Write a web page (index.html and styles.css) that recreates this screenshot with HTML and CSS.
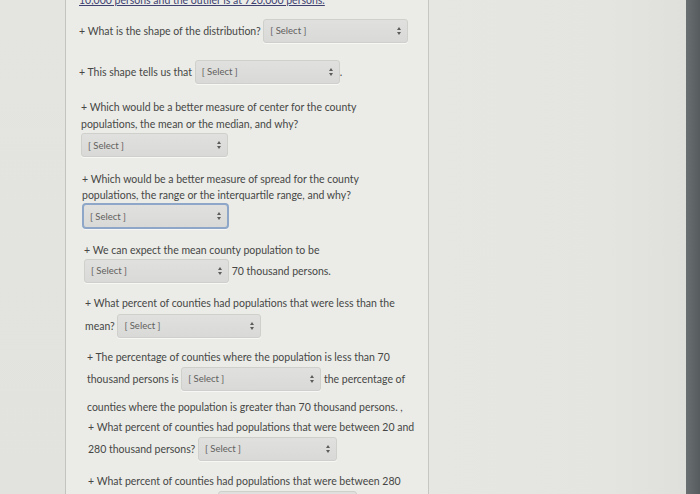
FILE: index.html
```html
<!DOCTYPE html>
<html>
<head>
<meta charset="utf-8">
<link rel="stylesheet" href="styles.css">
</head>
<body>
<div class="screen">
  <div class="gutter"></div>
  <div class="content">
    <div class="line top-link"><span class="link">10,000 persons and the outlier is at 720,000 persons.</span></div>

    <div class="row q1">+ What is the shape of the distribution? <span class="sel w145">[ Select ]<span class="arr"></span></span></div>

    <div class="row q2">+ This shape tells us that <span class="sel w145">[ Select ]<span class="arr"></span></span>.</div>

    <div class="block b2">
      <div class="line q3">+ Which would be a better measure of center for the county</div>
      <div class="line l17">populations, the mean or the median, and why?</div>
      <div class="row r24"><span class="sel w147">[ Select ]<span class="arr"></span></span></div>
    </div>

    <div class="block b3">
      <div class="line q4">+ Which would be a better measure of spread for the county</div>
      <div class="line">populations, the range or the interquartile range, and why?</div>
      <div class="row r26"><span class="sel w147 focus">[ Select ]<span class="arr"></span></span></div>
    </div>

    <div class="block b5">
      <div class="line q5">+ We can expect the mean county population to be</div>
      <div class="row"><span class="sel w145">[ Select ]<span class="arr"></span></span> 70 thousand persons.</div>
    </div>

    <div class="block b6">
      <div class="line q6">+ What percent of counties had populations that were less than the</div>
      <div class="row m2">mean? <span class="sel w144">[ Select ]<span class="arr"></span></span></div>
    </div>

    <div class="block b7">
      <div class="line q7">+ The percentage of counties where the population is less than 70</div>
      <div class="row m1">thousand persons is <span class="sel w140">[ Select ]<span class="arr"></span></span> the percentage of</div>
      <div class="line m8">counties where the population is greater than 70 thousand persons. ,</div>
    </div>

    <div class="block b8">
      <div class="line m4">+ What percent of counties had populations that were between 20 and</div>
      <div class="row m1">280 thousand persons? <span class="sel w139">[ Select ]<span class="arr"></span></span></div>
    </div>

    <div class="block b8">
      <div class="line q9">+ What percent of counties had populations that were between 280</div>
      <div class="row m1"><span class="spacer"></span><span class="sel w139">[ Select ]<span class="arr"></span></span></div>
    </div>
  </div>
  <div class="side"></div>
  <div class="edge"></div>
</div>
</body>
</html>
```
FILE: styles.css
```css
html, body {
  margin: 0;
  padding: 0;
  background: #e3e4e0;
}
.screen {
  width: 700px;
  height: 494px;
  display: flex;
  overflow: hidden;
  font-family: Lato, "Open Sans", sans-serif;
  font-size: 10.5px;
  color: #464745;
}
.gutter {
  width: 65px;
  flex: none;
  background: linear-gradient(180deg, #e4e5e1, #e2e3df);
  border-right: 1.5px solid #c3c4c0;
}
.content {
  width: 349px;
  flex: none;
  padding-left: 13px;
  background: #ebece8;
  border-right: 1.5px solid #c6c7c3;
  overflow: hidden;
}
.side {
  flex: 1;
  background: linear-gradient(90deg, #e6e7e3, #e4e5e1 70%, #dfe0dc);
}
.edge {
  width: 14px;
  flex: none;
  background: linear-gradient(90deg, #6a6f71, #565b5e);
}
.line {
  height: 16px;
  line-height: 16px;
  white-space: nowrap;
}
.l17 { height: 17px; line-height: 17px; }
.row {
  height: 25px;
  display: flex;
  align-items: center;
  white-space: pre;
}
.block.b2 { padding-left: 2px; }
.block.b3 { padding-left: 3px; }
.block.b5 { padding-left: 5px; }
.block.b6 { padding-left: 6px; }
.block.b7 { padding-left: 8px; }
.block.b8 { padding-left: 9px; }
.top-link {
  margin-top: -7px;
  height: 14px;
  line-height: 14px;
}
.link {
  color: #3e4170;
  text-decoration: underline;
}
.q1 { margin-top: 11px; }
.q2 { margin-top: 16px; }
.q3 { margin-top: 15px; height: 17px; line-height: 17px; }
.r24 { height: 24px; }
.r26 { height: 26px; }
.q4 { margin-top: 14px; }
.q5 { margin-top: 13px; }
.q6 { margin-top: 12px; }
.q7 { margin-top: 11px; }
.q9 { margin-top: 12px; }
.m1 { margin-top: 1px; }
.m2 { margin-top: 2px; }
.m4 { margin-top: 4px; }
.m8 { margin-top: 8px; }
.sel {
  position: relative;
  display: inline-flex;
  align-items: center;
  box-sizing: border-box;
  height: 24px;
  padding-left: 6px;
  font-size: 9.5px;
  color: #5f605d;
  background: linear-gradient(180deg, #e0e0de, #d9d9d7);
  border: 1px solid #cfd0cc;
  border-radius: 3px;
  box-shadow: 0 1px 0 rgba(255,255,255,0.6);
}
.sel.focus {
  border: 2px solid #8ea6c8;
  height: 26px;
  border-radius: 4px;
}
.w139 { width: 139px; }
.w140 { width: 140px; }
.w144 { width: 144px; }
.w145 { width: 145px; }
.w147 { width: 147px; }
.arr {
  position: absolute;
  right: 6px;
  top: 50%;
  width: 4px;
  height: 8px;
  margin-top: -4px;
}
.arr::before, .arr::after {
  content: "";
  position: absolute;
  left: 0;
  border-left: 2px solid transparent;
  border-right: 2px solid transparent;
}
.arr::before {
  top: 0;
  border-bottom: 3px solid #5c5d5a;
}
.arr::after {
  bottom: 0;
  border-top: 3px solid #5c5d5a;
}
.spacer {
  width: 130px;
}
```
